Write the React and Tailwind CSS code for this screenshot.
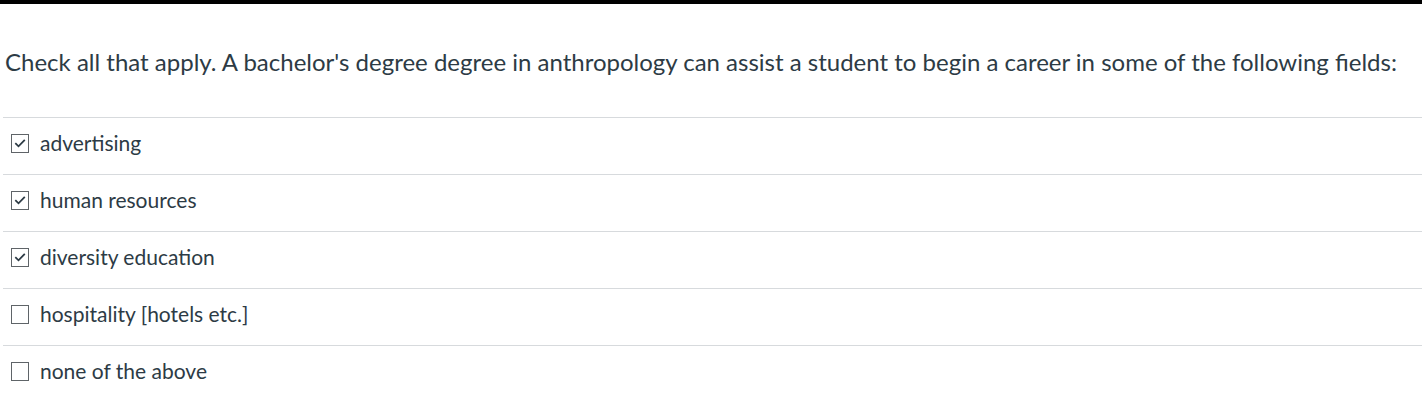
const options = [
  { label: 'advertising', checked: true },
  { label: 'human resources', checked: true },
  { label: 'diversity education', checked: true },
  { label: 'hospitality [hotels etc.]', checked: false },
  { label: 'none of the above', checked: false },
]

function Box({ checked }) {
  return (
    <span className="w-[18px] h-[19px] border-[1.5px] border-[#5f6468] bg-white flex items-center justify-center shrink-0">
      {checked && (
        <svg width="14" height="14" viewBox="0 0 14 14" fill="none">
          <path d="M2.3 7.2 L5.5 10.3 L11.8 3.8" stroke="#2d3b45" strokeWidth="1.8" />
        </svg>
      )}
    </span>
  )
}

export default function App() {
  return (
    <div className="w-[1422px] h-[416px] bg-white text-[#2d3b45] font-['Lato','Liberation_Sans',sans-serif] overflow-hidden">
      <div className="h-[4px] bg-black" />
      <div className="pl-[5px] pt-[42px] text-[24px] leading-[32px]">
        Check all that apply. A bachelor's degree degree in anthropology can assist a student to begin a career in some of the following fields:
      </div>
      <div className="mt-[39px] ml-[3px]">
        {options.map(o => (
          <div key={o.label} className="h-[57px] border-t border-[#d7dadd] flex items-center pl-[8px] pb-[6px] gap-[11px] text-[21px]">
            <Box checked={o.checked} />
            <span>{o.label}</span>
          </div>
        ))}
      </div>
    </div>
  )
}
